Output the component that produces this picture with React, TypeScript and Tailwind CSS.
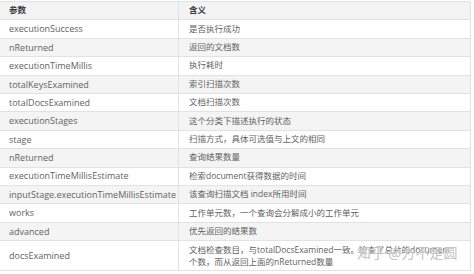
const rows: [string, string][] = [
  ['executionSuccess', '是否执行成功'],
  ['nReturned', '返回的文档数'],
  ['executionTimeMillis', '执行耗时'],
  ['totalKeysExamined', '索引扫描次数'],
  ['totalDocsExamined', '文档扫描次数'],
  ['executionStages', '这个分类下描述执行的状态'],
  ['stage', '扫描方式，具体可选值与上文的相同'],
  ['nReturned', '查询结果数量'],
  ['executionTimeMillisEstimate', '检索document获得数据的时间'],
  ['inputStage.executionTimeMillisEstimate', '该查询扫描文档 index所用时间'],
  ['works', '工作单元数，一个查询会分解成小的工作单元'],
  ['advanced', '优先返回的结果数'],
];

const font = "font-['Open_Sans','Noto_Sans_CJK_SC',sans-serif]";

export default function App() {
  return (
    <div className={`relative h-[274px] w-[474px] overflow-hidden bg-white pt-px ${font}`}>
      <div className="w-[471px] border-t border-r border-[#e2e2e2] text-[8.5px] text-[#626262]">
        {/* header */}
        <div className="flex h-[18.4px] items-center border-b border-[#e2e2e2] bg-[#f3f3f3] font-bold text-[#3a3a3a]">
          <div className="flex h-full w-[179px] items-center border-r border-[#e2e2e2] pl-[9px]">参数</div>
          <div className="pl-[10px]">含义</div>
        </div>
        {rows.map(([k, v], i) => (
          <div
            key={i}
            className={`flex h-[18.4px] items-center border-b border-[#e2e2e2] ${i % 2 === 1 ? 'bg-[#f4f4f4]' : 'bg-white'}`}
          >
            <div className="flex h-full w-[179px] items-center border-r border-[#e2e2e2] pl-[9px] text-[9px]">{k}</div>
            <div className="pl-[10px]">{v}</div>
          </div>
        ))}
        {/* two-line row */}
        <div className="flex h-[30px] items-center border-b border-[#e2e2e2] bg-white">
          <div className="flex h-full w-[179px] items-center border-r border-[#e2e2e2] pl-[9px] text-[9px]">docsExamined</div>
          <div className="pl-[10px] leading-[12px]">
            文档检查数目，与totalDocsExamined一致。检查了总共的document
            <br />
            个数，而从返回上面的nReturned数量
          </div>
        </div>
      </div>
      {/* watermark */}
      <div className="absolute left-[357px] top-[242px] text-[14px] text-[#c4c4c4] [text-shadow:0_0_1px_#fff] font-['Noto_Sans_CJK_SC',sans-serif]">
        知乎 @方不是圆
      </div>
    </div>
  );
}
